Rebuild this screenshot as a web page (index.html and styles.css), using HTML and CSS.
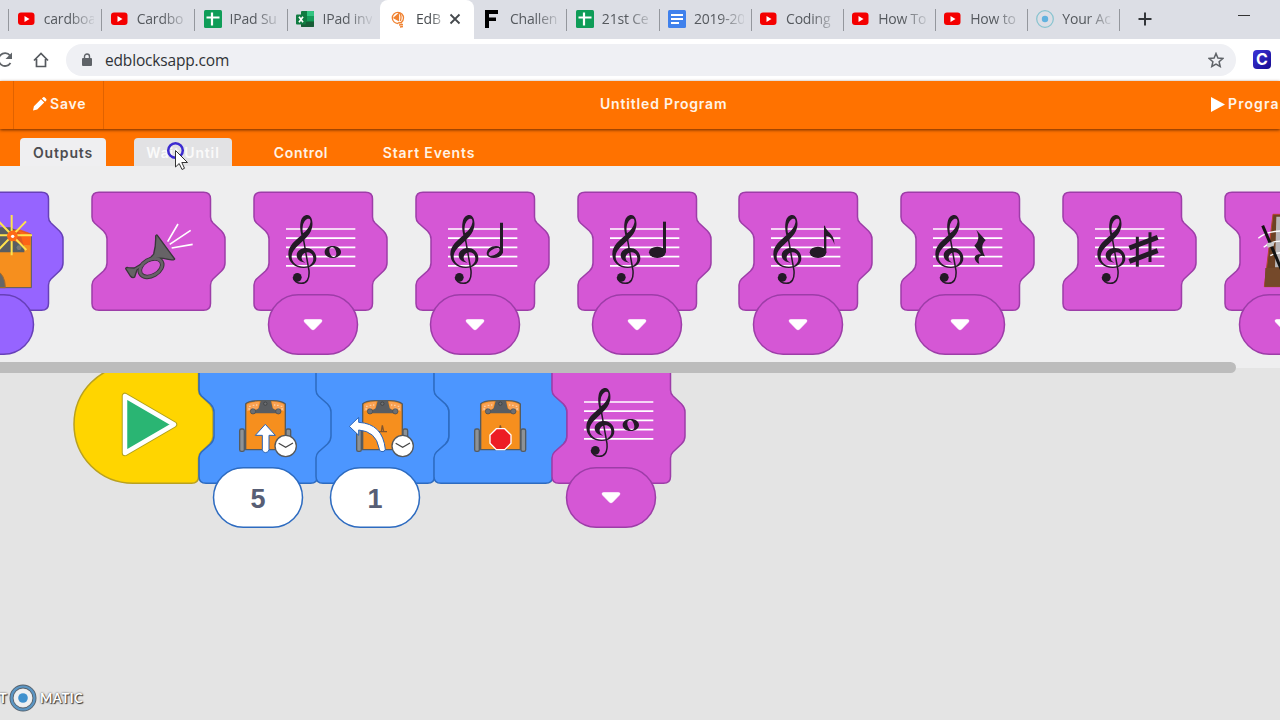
FILE: index.html
```
<!DOCTYPE html>
<html lang="en">
<head>
<meta charset="utf-8">
<title>EdBlocks</title>
<link rel="stylesheet" href="styles.css">
</head>
<body>
<svg class="defs" aria-hidden="true">
  <defs>
    <path id="body" d="M8 1.3H112.5Q119.5 1.3 119.5 8V26Q119.5 29.5 122 32L130.5 40Q134 43.500 134 48V72Q134 76.500 130.500 80L122 88Q119.500 90.500 119.500 94V112.500Q119.500 119.300 112.500 119.300H8Q1 119.300 1 112.500V94Q1 90.500 3.500 88L12.500 80Q16 76.500 16 72V48Q16 43.500 12.500 40L3.500 32Q1 29.500 1 26V8Q1 1.300 8 1.300Z"/>
    <rect id="pill" x="15.5" y="103.700" width="89" height="59.500" rx="29.750"/>
    <path id="arrow" d="M52.500 128.500H67.500Q70 129 68.500 131L61.500 138.200Q60 139.500 58.500 138.200L51.500 131Q50 129 52.500 128.500Z" fill="#fff" stroke="#fff" stroke-width=".6"/>
    <g id="clef">
      <path d="M138 147H346M138 174.500H346M138 202H346M138 230H346M138 257.500H346" stroke="#fff" stroke-width="5"/>
      <g fill="#231a26" fill-rule="evenodd">
        <path d="M202 105C214 106 219 122 217 138C214 162 196 176 183 188C168 202 155 214 155 230C155 248 172 260 192 260C208 260 220 250 220 236C220 224 212 217 203 217C192 217 184 225 185 235C186 242 190 245 196 248C181 247 170 238 170 226C170 212 184 204 198 204C216 204 229 217 229 235C229 253 213 264 191 264C164 264 145 247 145 222C145 196 168 180 184 166C181 150 179 140 182 125C185 112 192 105 202 105ZM209 117C201 113 193 122 189 134C187 144 187 152 189 160C200 152 209 140 211 128C212 122 211 119 209 117Z"/>
        <circle cx="172" cy="292" r="13"/>
      </g>
      <path d="M189 170L207 272C209 298 200 310 184 310C171 310 161 302 160 292" fill="none" stroke="#231a26" stroke-width="4.500"/>
    </g>
    <g id="whole"><path fill="#231a26" fill-rule="evenodd" d="M278 198C293 198 303 206 303 216S293 234 278 234S254 226 254 216S263 198 278 198ZM274 202C266 204 267 215 271 223C274 230 279 232 284 230C292 227 289 214 285 207C282 202 278 201 274 202Z"/></g>
    <g id="robot">
      <rect x="125" y="195" width="14" height="67" rx="5" fill="#8d9296" stroke="#555b60" stroke-width="4"/>
      <rect x="264" y="195" width="14" height="67" rx="5" fill="#8d9296" stroke="#555b60" stroke-width="4"/>
      <path d="M143 257V120Q150 111 180 110H226Q252 111 262 120V257Z" fill="#f68f1e" stroke="#555b60" stroke-width="4"/>
      <path d="M147 122Q160 114 184 113L180 134L147 142ZM258 122Q246 114 222 113L226 134L258 142Z" fill="#f9a153"/>
      <path d="M153 127h5m6-3h5m5-1h4M248 127h5m-16-3h5m-14-1h4M151 135h5m8-2h5M250 135h5m-16-2h5" stroke="#fbd0a0" stroke-width="4"/>
      <path d="M188 111H219L224 133Q236 144 246 136V148H159V136Q170 144 182 133Z" fill="#5a5d61"/>
      <circle cx="202" cy="119" r="5" fill="#6d6f72" stroke="#35383b" stroke-width="2"/>
      <circle cx="165" cy="142" r="8" fill="#6d6f72" stroke="#44474a" stroke-width="2"/>
      <circle cx="241" cy="142" r="8" fill="#6d6f72" stroke="#44474a" stroke-width="2"/>
      <path d="M199 202L202 184L206 202M188 203H216" fill="none" stroke="#85562b" stroke-width="4"/>
    </g>
    <g id="clock"><circle cx="263" cy="246" r="32" fill="#fff" stroke="#54585c" stroke-width="4"/><path d="M242 238L263 250L285 237" fill="none" stroke="#444" stroke-width="3.500"/></g>
    <g id="yt"><rect x="0" y="2.500" width="16.500" height="12.500" rx="3" fill="#f40000"/><path d="M6.500 6V12L11.500 9Z" fill="#fff"/></g>
    <g id="sheet"><rect width="18" height="18" rx="1.500" fill="#0f9d58"/><path d="M2.500 7.500H15.500M8 2.500V15.500" stroke="#fff" stroke-width="2.200"/></g>
  </defs>
</svg>

<header class="browser">
  <div class="tabs">
    <div class="tab"><svg class="fav" viewBox="0 0 18 18"><use href="#yt"/></svg><span class="label">cardboa</span></div>
    <div class="tab"><svg class="fav" viewBox="0 0 18 18"><use href="#yt"/></svg><span class="label">Cardbo</span></div>
    <div class="tab"><svg class="fav" viewBox="0 0 18 18"><use href="#sheet"/></svg><span class="label">IPad Su</span></div>
    <div class="tab"><svg class="fav" viewBox="0 0 18 18"><rect x="5" y="1" width="13" height="16" rx="1" fill="#107c41"/><path d="M11 1H17Q18 1 18 2V6H11Z" fill="#33c481"/><path d="M11 6h7v5h-7z" fill="#159c5a"/><path d="M5 12h13v4q0 1-1 1H6q-1 0-1-1z" fill="#185c37"/><rect y="4.500" width="10" height="10" rx="1" fill="#107c41"/><path d="M3 6.800L7 12.200M7 6.800L3 12.200" stroke="#fff" stroke-width="1.700"/></svg><span class="label">IPad inv</span></div>
    <div class="tab active"><svg class="fav" viewBox="0 0 18 18" fill="none" stroke="#f08332" stroke-width="1.300"><path d="M8 13.500A5.600 5.600 0 1 1 13.500 8Q13.500 11 11 13"/><path d="M9 2.500Q12 5 10.500 11"/><path d="M8.500 4V10.500L4 8Z" fill="#f08332"/><path d="M8 13L12 12.500M9 15L13 14.500M10 17L13 16.500"/></svg><span class="label">EdB</span><svg class="close" viewBox="0 0 12 12"><path d="M1.500 1.500L10.500 10.500M10.500 1.500L1.500 10.500" stroke="#45494d" stroke-width="1.800"/></svg></div>
    <div class="tab first"><svg class="fav" viewBox="0 0 18 18"><path d="M1 0H14V4H5V7.500H12V11H5V18H1Z" fill="#000"/></svg><span class="label">Challen</span></div>
    <div class="tab late"><svg class="fav" viewBox="0 0 18 18"><use href="#sheet"/></svg><span class="label">21st Ce</span></div>
    <div class="tab late"><svg class="fav" viewBox="0 0 18 18"><rect width="18" height="18" rx="1.500" fill="#4081ec"/><path d="M3 5H15M3 9H15M3 13H11" stroke="#fff" stroke-width="2"/></svg><span class="label">2019-20</span></div>
    <div class="tab late"><svg class="fav" viewBox="0 0 18 18"><use href="#yt"/></svg><span class="label">Coding</span></div>
    <div class="tab late"><svg class="fav" viewBox="0 0 18 18"><use href="#yt"/></svg><span class="label">How To</span></div>
    <div class="tab late"><svg class="fav" viewBox="0 0 18 18"><use href="#yt"/></svg><span class="label">How to</span></div>
    <div class="tab late"><svg class="fav" viewBox="0 0 18 18"><circle cx="9" cy="9" r="8.300" fill="none" stroke="#86c3cf" stroke-width="1.200"/><circle cx="9" cy="9" r="3.200" fill="#62b2df"/></svg><span class="label">Your Ac</span></div>
    <div class="tab add"><svg viewBox="0 0 14 14"><path d="M7 .5V13.500M.5 7H13.500" stroke="#33363a" stroke-width="2"/></svg></div>
    <span class="minimize"></span>
  </div>
  <div class="toolbar">
    <svg class="reload" viewBox="0 0 13 18"><path d="M10 4.500A6.400 6.400 0 1 0 10.500 12" fill="none" stroke="#5f6368" stroke-width="1.800"/><path d="M12 1.500V8H5.500Z" fill="#5f6368"/></svg>
    <svg class="home" viewBox="0 0 16 16"><path d="M1 8.500L8 1.500L15 8.500M3.500 7V14.500H12.500V7" fill="none" stroke="#55595e" stroke-width="1.700"/></svg>
    <div class="address">
      <svg class="lock" viewBox="0 0 10 13"><path d="M2.500 6V3.500A2.500 2.500 0 0 1 7.500 3.500V6" fill="none" stroke="#5f6368" stroke-width="1.400"/><rect x="0" y="5" width="10" height="8" rx="1" fill="#5f6368"/></svg>
      <span class="url">edblocksapp.com</span>
      <svg class="star" viewBox="0 0 16 16"><path d="M8 1.500L9.900 6.100L14.800 6.500L11.100 9.700L12.200 14.500L8 12L3.800 14.500L4.900 9.700L1.200 6.500L6.100 6.100Z" fill="none" stroke="#5f6368" stroke-width="1.500"/></svg>
    </div>
    <span class="extension">C</span>
  </div>
</header>

<nav class="appbar">
  <span class="edge"></span>
  <span class="save"><svg viewBox="0 0 15 15"><path d="M0 14.500L1 10L8.500 2.500L12 6L4.500 13.500ZM9.500 1.500L11 .3Q12 -.2 13 .8L14 2Q15 3 14 4L13 5Z" fill="#fff"/></svg>Save</span>
  <span class="program-name">Untitled Program</span>
  <span class="run"><svg viewBox="0 0 14 15"><path d="M0 0L14 7.500L0 15Z" fill="#fff"/></svg>Progra</span>
</nav>
<nav class="categories">
  <span class="cat on outputs">Outputs</span>
  <span class="cat hover wait">Wait Until
    <svg class="pointer" viewBox="0 0 24 32"><circle cx="9.500" cy="9.500" r="7.300" fill="none" stroke="#3c2bd0" stroke-width="2.500"/><path d="M9.500 9.500V26L13.200 22.500L16 28.500L18.500 27.300L15.800 21.500H21.500Z" fill="#fff" stroke="#333" stroke-width="1"/></svg>
  </span>
  <span class="cat control">Control</span>
  <span class="cat events">Start Events</span>
</nav>

<section class="palette">
  <div class="strip">
    <svg class="block violet" viewBox="0 0 136 165"><use href="#body"/><use href="#pill"/>
      <g transform="translate(-13 -11) scale(.33333) translate(251 0)" stroke="none">
        <path d="M-60 323V155Q30 135 95 163V323Z" fill="#f68f1e" stroke="#555b60" stroke-width="3"/>
        <path d="M-10 142H34L62 160L74 205V217H-10Z" fill="#5a5d61"/><circle cx="58" cy="203" r="9" fill="#777" stroke="#48606a" stroke-width="3"/>
        <path d="M-10 270Q17 285 17 323H-10Z" fill="#666" stroke="#a66a2b" stroke-width="3"/>
        <path d="M38 150L60 148L92 160V196L66 194L38 180Z" fill="#ff5a14" opacity=".8"/>
        <path d="M36 105V226M-20 166H97M-4 123L80 210M79 124L-5 211" stroke="#ffe34d" stroke-width="6"/><circle cx="38" cy="168" r="16" fill="#ff6a16"/><circle cx="39" cy="169" r="5" fill="#fff"/>
      </g></svg>
    <svg class="block" viewBox="0 0 136 165"><use href="#body"/>
      <g transform="translate(-13 -11) scale(.33333) translate(-234 0)" stroke="#39363a" stroke-linejoin="round">
        <ellipse cx="453" cy="263" rx="36" ry="24" transform="rotate(-30 453 263)" fill="none" stroke-width="14"/>
        <path d="M472 166L524 237Q524 243 490 235Q465 231 441 249L411 270L404 291Q398 296 391 288L377 266Q377 261 385 263L403 264Q452 237 461 222Q468 197 467 168Q469 163 472 166Z" fill="#666366" stroke-width="4"/>
        <ellipse cx="453" cy="263" rx="36" ry="24" transform="rotate(-30 453 263)" fill="#d557d5" stroke="#666366" stroke-width="8"/>
        <ellipse cx="453" cy="263" rx="31" ry="19" transform="rotate(-30 453 263)" fill="none" stroke-width="3"/>
        <path d="M503 185L534 132M509 193L572 151M515 204L578 193" stroke="#fff" stroke-width="5"/>
      </g></svg>
    <svg class="block" viewBox="0 0 136 165"><use href="#body"/><use href="#pill"/><use href="#arrow"/><g transform="translate(-13 -11) scale(.33333)" stroke="none"><use href="#clef"/><use href="#whole"/></g></svg>
    <svg class="block" viewBox="0 0 136 165"><use href="#body"/><use href="#pill"/><use href="#arrow"/><g transform="translate(-13 -11) scale(.33333)" stroke="none"><use href="#clef"/><path fill="#231a26" fill-rule="evenodd" d="M294 128H303V218Q296 234 275 234Q254 233 254 219Q257 199 282 198Q290 198 294 201ZM291 205C281 201 261 213 260 222C260 233 286 225 292 213Q294 208 291 205Z"/></g></svg>
    <svg class="block" viewBox="0 0 136 165"><use href="#body"/><use href="#pill"/><use href="#arrow"/><g transform="translate(-13 -11) scale(.33333)" stroke="none"><use href="#clef"/><ellipse cx="280" cy="217" rx="25" ry="17" fill="#231a26"/><path d="M297 125H306V217H297Z" fill="#231a26"/></g></svg>
    <svg class="block" viewBox="0 0 136 165"><use href="#body"/><use href="#pill"/><use href="#arrow"/><g transform="translate(-13 -11) scale(.33333)" stroke="none"><use href="#clef"/><ellipse cx="279" cy="217" rx="25" ry="17" fill="#231a26"/><path d="M297 137H300C303 156 331 161 328 195C326 179 315 169 304 168V217H297Z" fill="#231a26"/></g></svg>
    <svg class="block" viewBox="0 0 136 165"><use href="#body"/><use href="#pill"/><use href="#arrow"/><g transform="translate(-13 -11) scale(.33333)" stroke="none"><use href="#clef"/><path d="M268 150L296 181C284 192 282 205 294 229C280 223 270 232 277 252C259 243 256 222 282 223L262 197C275 185 278 170 268 150Z" fill="#231a26"/></g></svg>
    <svg class="block" viewBox="0 0 136 165"><use href="#body"/><g transform="translate(-13 -11) scale(.33333)" stroke="none"><use href="#clef"/><path d="M265 170V260M303 157V246" stroke="#231a26" stroke-width="9"/><path d="M241 204L326 172M241 244L326 212" stroke="#231a26" stroke-width="15"/></g></svg>
    <svg class="block" viewBox="0 0 136 165"><use href="#body"/><use href="#pill"/><use href="#arrow"/><g transform="translate(-13 -11) scale(.33333) translate(-962 0)" stroke="none"><path d="M1148 103H1240L1260 320H1122Z" fill="#6d4224" stroke="#b5452c" stroke-width="3"/><path d="M1158 110H1230V262H1154Z" fill="#b9b6b8"/><path d="M1125 264H1250L1255 320H1123Z" fill="#75492a"/><path d="M1104 175Q1130 152 1180 153M1120 202Q1145 180 1180 184M1140 227Q1155 217 1180 218" fill="none" stroke="#fff" stroke-width="4"/><path d="M1117 137L1176 275" stroke="#111" stroke-width="9"/><path d="M1129 190L1153 185L1150 198L1132 203Z" fill="#c8c8c8"/></g></svg>
  </div>
</section>
<div class="scrollbar"></div>

<main class="workspace">
  <div class="program">
    <svg class="block start" viewBox="0 0 142 165"><path d="M60 1.300H125.500V26Q125.500 29.500 128 32L136.500 40Q140 43.500 140 48V72Q140 76.500 136.500 80L128 88Q125.500 90.500 125.500 94V112.500Q125.500 119.300 118.500 119.300H60C27 119.300 1 93 1 60.300S27 1.300 60 1.300Z"/><path d="M52 32V89L101 60.500Z" fill="#2ab573" stroke="#b0a11d" stroke-width="6.500" stroke-linejoin="round"/><path d="M52 32V89L101 60.500Z" fill="#2ab573" stroke="#fff" stroke-width="4.500" stroke-linejoin="round"/></svg>
    <svg class="block blue" viewBox="0 0 136 165"><use href="#body"/><use href="#pill" fill="#fff"/><g transform="scale(.33333)" stroke="none"><use href="#robot"/><path d="M202 181L232 214H213V257Q212 266 202 266Q193 265 193 257V214H172Z" fill="#fff" stroke="#2863b8" stroke-width="3"/><use href="#clock"/></g><text x="60" y="143.500">5</text></svg>
    <svg class="block blue" viewBox="0 0 136 165"><use href="#body"/><use href="#pill" fill="#fff"/><g transform="scale(.33333)" stroke="none"><use href="#robot"/><path d="M103 187L131 160V175Q203 179 211 256Q209 264 201 263Q192 263 192 252Q183 202 131 198V214Z" fill="#fff" stroke="#2863b8" stroke-width="3"/><use href="#clock"/></g><text x="60" y="143.500">1</text></svg>
    <svg class="block blue" viewBox="0 0 136 165"><use href="#body"/><g transform="scale(.33333)" stroke="none"><use href="#robot"/><path d="M190 194H215L234 213V238L215 257H190L171 238V213Z" fill="#ed1c24" stroke="#fff" stroke-width="4"/></g></svg>
    <svg class="block" viewBox="0 0 136 165"><use href="#body"/><use href="#pill"/><use href="#arrow"/><g transform="translate(-13 -11) scale(.33333)" stroke="none"><use href="#clef"/><use href="#whole"/></g></svg>
  </div>
  <div class="watermark"><span class="left">T</span><svg viewBox="0 0 28 28"><circle cx="14" cy="14" r="11.500" fill="none" stroke="#56616b" stroke-width="4"/><circle cx="14" cy="14" r="11.500" fill="none" stroke="#5b96c4" stroke-width="2.200"/><circle cx="14" cy="14" r="9" fill="#edf0f2"/><circle cx="14" cy="14" r="4.800" fill="#3f91ce"/></svg><span>MATIC</span></div>
</main>
</body>
</html>
```
FILE: styles.css
```
* { box-sizing: border-box; }
body {
  margin: 0;
  width: 1280px;
  height: 720px;
  overflow: hidden;
  display: flex;
  flex-direction: column;
  background: #e4e4e4;
  font-family: "Open Sans", "Noto Sans", sans-serif;
}
svg { display: block; flex: none; }
.defs { position: absolute; width: 0; height: 0; }

.browser { flex: none; height: 81px; background: #fff; }
.tabs { display: flex; height: 39px; padding-left: 8.400px; background: #dcdee5; }
.tab { position: relative; flex: none; display: flex; align-items: center; width: 92.900px; padding: 0 0 1px 9.400px; }
.tab::before { content: ""; position: absolute; left: 0; top: 9px; width: 1px; height: 22px; background: #94979d; }
.tab.active::before, .tab.first::before { display: none; }
.tab.active { background: #fff; border-radius: 8px 8px 0 0; width: 94px; padding-left: 10px; }
.tab.first { width: 92.500px; padding-left: 10px; }
.tab.late { width: 92.100px; padding-left: 9.400px; }
.fav { width: 18px; height: 18px; }
.label {
  width: 50px; margin-left: 8px; white-space: nowrap;
  font-size: 14px; letter-spacing: -.2px; line-height: 22px; color: #55595e;
  mask-image: linear-gradient(90deg, #000 50%, rgba(0, 0, 0, .1) 100%);
}
.active .label { width: 26px; color: #494d51; mask-image: linear-gradient(90deg, #000 60%, rgba(0, 0, 0, .3) 100%); }
.close { width: 12px; height: 12px; margin-left: 7px; }
.tab.add { padding-left: 19px; width: 60px; }
.tab.add svg { width: 14px; height: 14px; }
.minimize { width: 12px; height: 1px; margin: 15px 0 0 59px; background: #333; }

.toolbar { display: flex; align-items: center; height: 42px; padding-bottom: 1px; }
.reload { width: 13px; height: 18px; }
.home { width: 16px; height: 16px; margin-left: 20px; }
.address { display: flex; align-items: center; width: 1170px; height: 32px; margin-left: 17px; padding: 0 12px 0 16px; border-radius: 16px; background: #eff0f4; }
.lock { width: 10px; height: 13px; }
.url { margin-left: 13px; font-size: 15.500px; color: #303337; letter-spacing: -.17px; }
.star { width: 16px; height: 16px; margin-left: auto; }
.extension { width: 18px; height: 19px; margin-left: 17px; border-radius: 4px; background: linear-gradient(135deg, #3c35d8, #160b91); color: #fff; font: bold 16px/19px Inter, sans-serif; text-align: center; }

.appbar { position: relative; z-index: 1; flex: none; display: flex; align-items: stretch; height: 48px; background: #ff7200; box-shadow: 0 1px 3px rgba(70, 25, 0, .8); color: #fff4e8; font: 600 14px/46px Inter, sans-serif; letter-spacing: .82px; }
.edge { width: 14px; border-right: 1px solid #e06200; }
.save { display: flex; align-items: center; width: 90px; padding: 0 0 2px 19px; border-right: 1px solid #e06200; }
.save svg { width: 14px; height: 14px; margin-right: 3px; }
.program-name { margin-left: 496px; width: 140px; white-space: nowrap; }
.run { display: flex; align-items: center; margin-left: 471px; padding-bottom: 2px; white-space: nowrap; width: 69px; letter-spacing: 1.100px; }
.run svg { width: 14px; height: 15px; margin-right: 3px; }

.categories { flex: none; display: flex; align-items: flex-end; height: 37px; padding-left: 20px; background: #ff7200; font: 600 14px/29px Inter, sans-serif; color: #fff2e5; letter-spacing: .85px; }
.cat { position: relative; height: 28px; border-radius: 4px 4px 0 0; text-align: center; white-space: nowrap; }
.on { background: #efeff1; color: #4c4d50; }
.hover { background: #e2e2e4; color: #fafafa; }
.outputs { width: 86px; }
.wait { width: 98px; margin-left: 28px; }
.control { width: 56px; margin-left: 41px; letter-spacing: .65px; }
.events { width: 94px; margin-left: 53px; }
.pointer { position: absolute; left: 32px; top: 3px; width: 24px; height: 32px; z-index: 2; }

.palette { flex: none; height: 202px; padding-top: 25px; background: #eeeeef; overflow: hidden; }
.strip { display: flex; gap: 25.800px; margin-left: -70.600px; }
.block { width: 136px; height: 165px; fill: #d557d5; stroke: #9d3da8; stroke-width: 1.500; }
.violet { fill: #9664ff; stroke: #6740b8; }
.blue { fill: #4c96ff; stroke: #2d6bc0; }
.start { width: 142px; fill: #ffd500; stroke: #b9a11f; }
.block text { font: bold 27px "Liberation Sans", sans-serif; text-anchor: middle; fill: #575e75; stroke: none; }
.scrollbar { position: relative; flex: none; width: 1236px; height: 11px; margin-top: -6px; border-radius: 0 6px 6px 0; background: #bcbcbc; }

.workspace { flex: 1; display: flex; flex-direction: column; justify-content: space-between; overflow: hidden; }
.program { display: flex; margin: -9px 0 0 72.600px; }
.program .block { margin-right: -18.200px; }
.program .start { margin-right: -17px; }
.watermark { display: flex; align-items: center; height: 28px; margin-bottom: 8px; font: 700 13px/28px Lato, sans-serif; letter-spacing: .5px; color: #fff; text-shadow: 1px 1px 1px #333, 0 0 2px #444; }
.watermark svg { width: 28px; height: 28px; margin: 0 3px 0 4px; }
.watermark .left { width: 6px; margin-left: -1px; }
```
